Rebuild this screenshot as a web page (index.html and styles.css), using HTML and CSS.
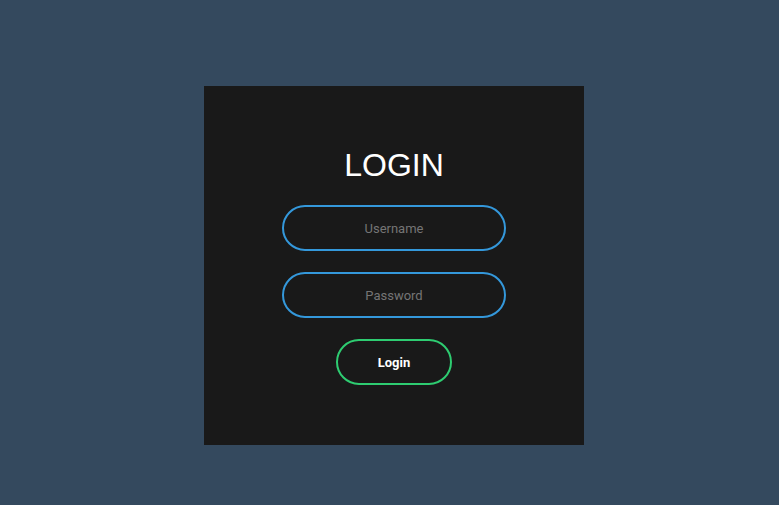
FILE: index.html
```html
<!DOCTYPE html>
<html lang="en">
<head>
    <meta charset="UTF-8">
    <meta name="viewport" content="width=device-width, initial-scale=1.0">
    <title>Login</title>
    <link rel="stylesheet" href="styles.css">
</head>
<body>
    <form class="box" action="#" method="post">
        <h1>Login</h1>
        <input type="text" name="username" placeholder="Username">
        <input type="password" name="password" placeholder="Password">
        <input type="submit" name="login" value="Login">
    </form>
</body>
</html>
```

FILE: styles.css
```css
body {
    margin: 0;
    padding: 86px 0 0 204px;
    font-family: 'Liberation Sans', Arial, sans-serif;
    background-color: #34495e;
    min-height: 100vh;
    box-sizing: border-box;
}

.box {
    width: 380px;
    box-sizing: border-box;
    padding: 61px 0 60px;
    background-color: #191919;
    text-align: center;
    display: flex;
    flex-direction: column;
    align-items: center;
}

.box h1 {
    margin: 0 0 22px;
    color: white;
    text-transform: uppercase;
    font-size: 32px;
    font-weight: 500;
    line-height: 36px;
}

.box input[type="text"],
.box input[type="password"] {
    display: block;
    width: 224px;
    height: 46px;
    box-sizing: border-box;
    margin: 0 0 21px;
    padding: 0 10px;
    border: 2px solid #3498db;
    border-radius: 24px;
    background: none;
    outline: none;
    color: white;
    text-align: center;
    font-family: Roboto, sans-serif;
    font-size: 13px;
    transition: 0.25s;
}

.box input::placeholder {
    color: #757575;
}

.box input[type="submit"] {
    display: block;
    height: 46px;
    box-sizing: border-box;
    margin: 0;
    padding: 0 40px;
    border: 2px solid #2ecc71;
    border-radius: 24px;
    background: none;
    outline: none;
    color: white;
    font-family: Roboto, sans-serif;
    font-size: 13px;
    font-weight: bold;
    cursor: pointer;
    transition: 0.25s;
}

.box input[type="submit"]:hover {
    background: #2ecc71;
}
```
